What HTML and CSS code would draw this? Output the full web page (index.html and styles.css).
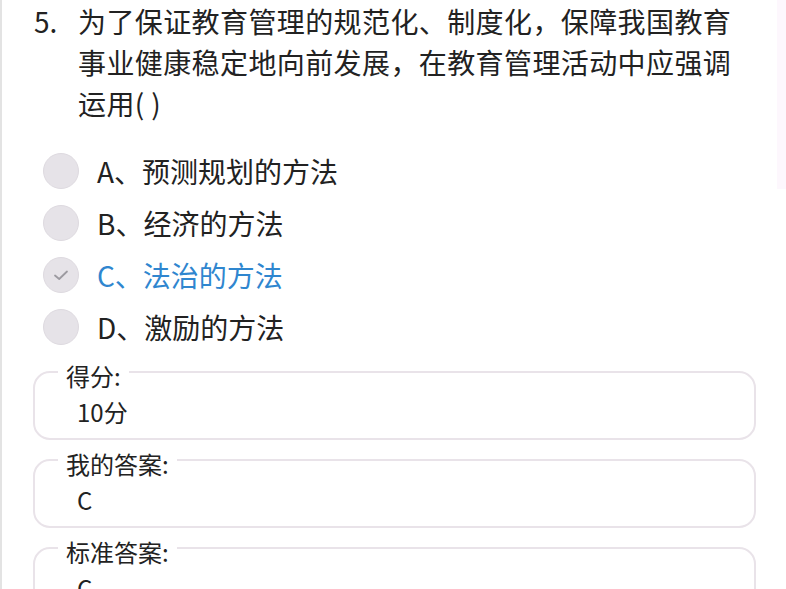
FILE: index.html
```html
<!DOCTYPE html>
<html lang="zh-CN">
<head>
    <meta charset="UTF-8">
    <meta name="viewport" content="width=device-width, initial-scale=1.0">
    <title>答题详情</title>
    <link rel="stylesheet" href="styles.css">
</head>
<body>
    <div class="page">
        <div class="edge"></div>
        <div class="question">
            <div class="num">5.</div>
            <div class="stem">为了保证教育管理的规范化、制度化，保障我国教育事业健康稳定地向前发展，在教育管理活动中应强调运用( )</div>
        </div>

        <div class="options">
            <div class="option">
                <span class="radio"></span>
                <span class="label">A、预测规划的方法</span>
            </div>
            <div class="option">
                <span class="radio"></span>
                <span class="label">B、经济的方法</span>
            </div>
            <div class="option checked">
                <span class="radio">
                    <svg width="20" height="20" viewBox="0 0 20 20"><path d="M4 10.5 L8.2 14 L16 6.5" fill="none" stroke="#9c9aa0" stroke-width="1.8" stroke-linecap="round" stroke-linejoin="round"/></svg>
                </span>
                <span class="label">C、法治的方法</span>
            </div>
            <div class="option">
                <span class="radio"></span>
                <span class="label">D、激励的方法</span>
            </div>
        </div>

        <fieldset class="box">
            <legend>得分:</legend>
            <div class="value">10分</div>
        </fieldset>
        <fieldset class="box">
            <legend>我的答案:</legend>
            <div class="value">C</div>
        </fieldset>
        <fieldset class="box">
            <legend>标准答案:</legend>
            <div class="value">C</div>
        </fieldset>
    </div>
</body>
</html>
```

FILE: styles.css
```css
* {
    box-sizing: border-box;
}
body {
    margin: 0;
    background: #fff;
    color: #222;
    font-family: "Noto Sans CJK SC", "Noto Sans", sans-serif;
    overflow: hidden;
}
.page {
    position: relative;
    border-left: 2px solid #e3e3e3;
    min-height: 589px;
    padding: 1px 0 0 0;
}
/* faint strip on the right side */
.edge {
    position: absolute;
    top: 0;
    right: 0;
    width: 9px;
    height: 189px;
    background: #fdf7fd;
}
.question {
    display: flex;
    font-size: 28px;
    line-height: 41px;
}
.num {
    width: 76px;
    padding-left: 32px;
    flex-shrink: 0;
}
.stem {
    width: 664px;
    letter-spacing: 0.4px;
}
.options {
    margin-top: 21px;
}
.option {
    display: flex;
    align-items: center;
    height: 52px;
    padding-left: 41px;
    font-size: 28px;
}
.radio {
    width: 36px;
    height: 36px;
    border-radius: 50%;
    background: #e6e3e8;
    border: 1px solid #dedae0;
    display: flex;
    align-items: center;
    justify-content: center;
    margin-right: 18px;
}
.checked .label {
    color: #2f86cf;
}
.box {
    margin: 0 30px 1px 31px;
    border: 2px solid #e9e3e9;
    border-radius: 17px;
    padding: 0 0 11px 42px;
    font-size: 24px;
}
.box legend {
    margin-left: -19px;
    padding: 8px 8px 0 8px;
    line-height: 30px;
}
.value {
    margin-top: 6px;
    line-height: 30px;
}
```
